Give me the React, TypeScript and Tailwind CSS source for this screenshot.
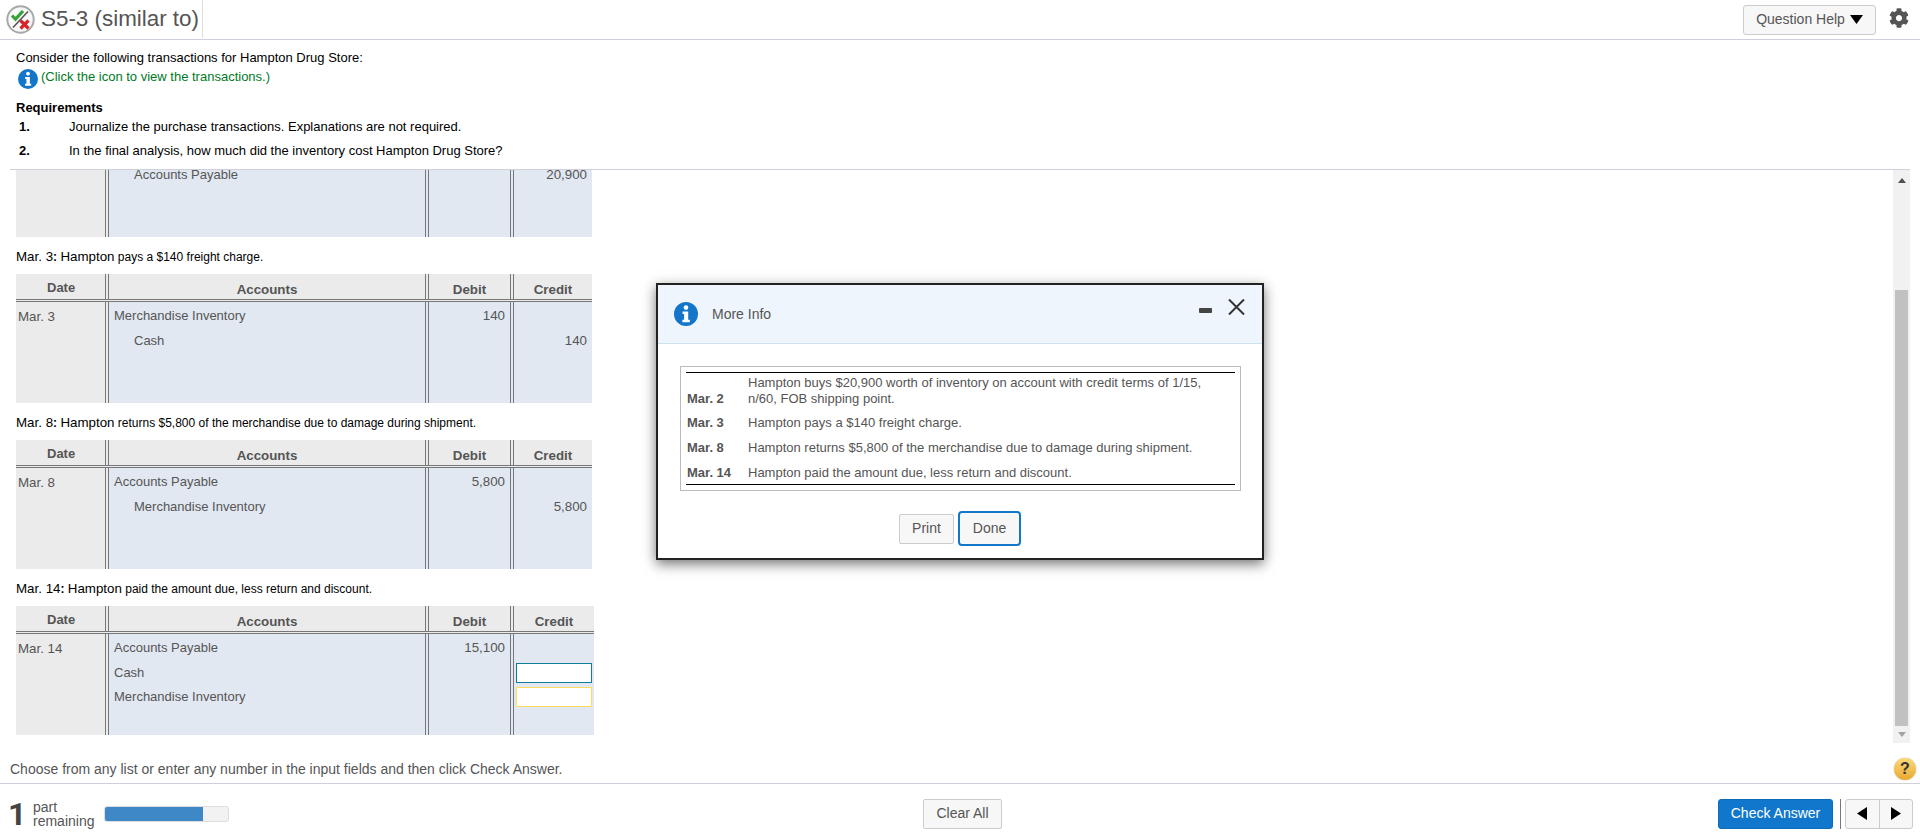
import React from "react";
import { FaCog } from "react-icons/fa";

const sans = "font-['Liberation_Sans',Arial,sans-serif]";

function InfoIcon({ size }: { size: number }) {
  return (
    <svg width={size} height={size} viewBox="0 0 24 24" className="shrink-0">
      <circle cx="12" cy="12" r="12" fill="#1476c9" />
      <circle cx="12" cy="5.6" r="2.3" fill="#fff" />
      <path d="M8.6 9.6h5.6v8.2h1.6v2.4H8.4v-2.4h1.7v-5.8H8.6z" fill="#fff" />
    </svg>
  );
}

function StatusIcon() {
  return (
    <svg width="29" height="29" viewBox="0 0 29 29" className="shrink-0">
      <circle cx="14.5" cy="14.5" r="13.2" fill="#f8f8f8" stroke="#a8a8a8" strokeWidth="2" />
      <path d="M7 22.5L22 6.5" fill="none" stroke="#555" strokeWidth="1.6" />
      <path d="M6 10.5l3.5 3.7L17 6" fill="none" stroke="#35a335" strokeWidth="3.2" />
      <path d="M14.5 15.5l8 8M22.5 15.5l-8 8" fill="none" stroke="#d8232a" strokeWidth="3.2" />
    </svg>
  );
}

type Row = { account: string; indent?: boolean; debit?: string; credit?: string; input?: string };

function Journal({ date, rows, credit = "w-[78px]" }: { date: string; rows: Row[]; credit?: string }) {
  return (
    <div className={`flex flex-col ${credit === "w-[80px]" ? "w-[578px]" : "w-[576px]"} text-[#555] text-[13.33px]`}>
      <div className="flex h-[25px] bg-[#ebebeb] border-b-[3px] border-double border-[#777] box-content font-bold">
        <div className="w-[93px] pl-[31px] pt-[4px] text-[13px] border-r-4 border-double border-[#777]">Date</div>
        <div className="w-[320px] text-center pt-[6px] border-r-4 border-double border-[#777]">Accounts</div>
        <div className="w-[85px] text-center pt-[6px] border-r-4 border-double border-[#777]">Debit</div>
        <div className={`${credit} text-center pt-[6px]`}>Credit</div>
      </div>
      <div className="flex h-[101px]">
        <div className="w-[93px] bg-[#ebebeb] pl-[2px] pt-[5px] border-r-4 border-double border-[#777]">{date}</div>
        <div className="w-[320px] bg-[#e2e8f2] pt-[4px] pl-[5px] text-[13px] border-r-4 border-double border-[#777]">
          {rows.map((r) => (
            <div key={r.account} className={`h-[24.7px] leading-[20px] ${r.indent ? "pl-[20px]" : ""}`}>{r.account}</div>
          ))}
        </div>
        <div className="w-[85px] bg-[#e2e8f2] pt-[4px] pr-[5px] text-right border-r-4 border-double border-[#777]">
          {rows.map((r) => (
            <div key={r.account} className="h-[24.7px] leading-[20px]">{r.debit ?? "\u00a0"}</div>
          ))}
        </div>
        <div className={`${credit} bg-[#e2e8f2] pt-[4px] flex flex-col items-end`}>
          {rows.map((r) => (
            <div key={r.account} className={`h-[24.7px] leading-[20px] ${r.input ? "pr-[2px]" : "pr-[5px]"}`}>
              {r.input ? (
                <div className={`w-[76px] h-[20px] bg-white border ${r.input}`} />
              ) : (
                r.credit ?? "\u00a0"
              )}
            </div>
          ))}
        </div>
      </div>
    </div>
  );
}

function Caption({ mar, text }: { mar: string; text: string }) {
  return (
    <p className="h-[37px] pt-[12px] leading-[16px] text-[12px] text-black">
      <span className="text-[13.33px]">Mar. {mar}</span><b>:</b> <span className="text-[13.33px]">Hampton</span> {text}
    </p>
  );
}

export default function App() {
  return (
    <div className={`relative flex flex-col h-[837px] w-[1920px] overflow-hidden bg-white ${sans}`}>
      <header className="flex items-center h-[40px] shrink-0 border-b border-[#cfd0dc] pr-[11px]">
        <div className="flex items-center h-[38px] mb-[1px] w-[203px] pl-[6px] gap-[6px] border-r border-[#ddd]">
          <StatusIcon />
          <span className="text-[22.4px] text-[#555] leading-none whitespace-nowrap">S5-3 (similar to)</span>
        </div>
        <button className="ml-auto flex items-center justify-center gap-[5px] w-[133px] h-[30px] rounded-[3px] border border-[#ccc] bg-[#f7f7f7] text-[14px] text-[#555]">
          Question Help
          <svg width="13" height="9" viewBox="0 0 13 9"><path d="M0 0h13L6.5 9z" fill="#000" /></svg>
        </button>
        <FaCog className="ml-[13px] mb-[3px] text-[#555]" size={20} />
      </header>

      <section className="flex flex-col h-[129px] shrink-0 pl-[16px] text-[13px] text-black">
        <p className="h-[27px] pt-[10px] leading-[16px]">Consider the following transactions for Hampton Drug Store:</p>
        <p className="flex items-center h-[21px] text-[#007a1f]">
          <span className="ml-[2px] mr-[3px] mt-[3px]"><InfoIcon size={20} /></span>
          <span className="-mt-[1px]">(Click the icon to view the transactions.)</span>
        </p>
        <p className="mt-[12px] h-[16px] leading-[16px] font-bold">Requirements</p>
        <div className="flex items-center h-[22px]"><b className="w-[53px] pl-[3px]">1.</b><span>Journalize the purchase transactions. Explanations are not required.</span></div>
        <div className="flex items-center h-[25px]"><b className="w-[53px] pl-[3px]">2.</b><span>In the final analysis, how much did the inventory cost Hampton Drug Store?</span></div>
      </section>

      <main className="flex h-[573px] shrink-0 ml-[10px] mr-[10px] border-t border-[#cfd0dc]">
        <div className="flex-1 overflow-hidden pl-[6px] text-[#555] text-[13.33px]">
          <div className="flex h-[67px] w-[576px]">
            <div className="w-[93px] bg-[#ebebeb] border-r-4 border-double border-[#777]" />
            <div className="w-[320px] bg-[#e2e8f2] pl-[25px] text-[13px] border-r-4 border-double border-[#777] leading-[16px]"><span className="block -mt-[3px]">Accounts Payable</span></div>
            <div className="w-[85px] bg-[#e2e8f2] border-r-4 border-double border-[#777]" />
            <div className="w-[78px] bg-[#e2e8f2] pr-[5px] text-right leading-[16px]"><span className="block -mt-[3px]">20,900</span></div>
          </div>
          <Caption mar="3" text="pays a $140 freight charge." />
          <Journal date="Mar. 3" rows={[{ account: "Merchandise Inventory", debit: "140" }, { account: "Cash", indent: true, credit: "140" }]} />
          <Caption mar="8" text="returns $5,800 of the merchandise due to damage during shipment." />
          <Journal date="Mar. 8" rows={[{ account: "Accounts Payable", debit: "5,800" }, { account: "Merchandise Inventory", indent: true, credit: "5,800" }]} />
          <Caption mar="14" text="paid the amount due, less return and discount." />
          <Journal date="Mar. 14" credit="w-[80px]" rows={[{ account: "Accounts Payable", debit: "15,100" }, { account: "Cash", input: "border-[#0f7c9b]" }, { account: "Merchandise Inventory", input: "border-[#ffdc5c]" }]} />
        </div>
        <div className="flex flex-col items-center w-[17px] h-[573px] bg-[#f1f1f1]">
          <svg className="mt-[8px] shrink-0" width="8" height="5" viewBox="0 0 8 5"><path d="M0 5L4 0l4 5z" fill="#505050" /></svg>
          <div className="w-[13px] h-[436px] mt-[107px] bg-[#c1c1c1]" />
          <svg className="mt-[6px] shrink-0" width="8" height="5" viewBox="0 0 8 5"><path d="M0 0h8L4 5z" fill="#a3a3a3" /></svg>
        </div>
      </main>

      <div className="flex items-center h-[41px] shrink-0 pl-[10px] pr-[4px] text-[14px] text-[#555]">
        <span className="mt-[13px]">Choose from any list or enter any number in the input fields and then click Check Answer.</span>
        <span className="ml-auto mt-[12px] flex items-center justify-center w-[22px] h-[22px] rounded-full bg-gradient-to-b from-[#fbd977] to-[#e9a92d] shadow-[0_0_1px_#8a6d20] text-[16px] font-bold text-[#333]">?</span>
      </div>

      <footer className="flex items-center h-[54px] shrink-0 border-t border-[#cfd0dc] pl-[8px] pr-[7px] pt-[6px]">
        <span className="text-[32px] font-bold leading-none text-[#444] w-[25px] font-['Roboto',sans-serif]">1</span>
        <div className="w-[71px] text-[14px] leading-[14px] text-[#555]">part<br />remaining</div>
        <div className="w-[125px] h-[16px] rounded-[3px] bg-[#f2f2f2] border border-[#ddd] overflow-hidden">
          <div className="h-full w-[80%] bg-[#3f88c8]" />
        </div>
        <button className="ml-[694px] w-[79px] h-[30px] rounded-[2px] border border-[#ccc] bg-[#f7f7f7] text-[14px] text-[#555]">Clear All</button>
        <button className="ml-auto h-[30px] w-[115px] rounded-[3px] bg-[#1177cc] border border-[#0c6cb8] text-[14px] text-white">Check Answer</button>
        <span className="w-px h-[30px] bg-[#777] ml-[7px] mr-[4px]" />
        <div className="flex w-[68px] h-[30px] rounded-[3px] border border-[#ccc] bg-[#f7f7f7]">
          <div className="flex flex-1 items-center justify-center border-r border-[#ccc]">
            <svg width="10" height="13" viewBox="0 0 10 13"><path d="M10 0v13L0 6.5z" fill="#000" /></svg>
          </div>
          <div className="flex flex-1 items-center justify-center">
            <svg width="10" height="13" viewBox="0 0 10 13"><path d="M0 0v13l10-6.5z" fill="#000" /></svg>
          </div>
        </div>
      </footer>

      <div className="absolute left-[656px] top-[283px] w-[608px] h-[277px] flex flex-col bg-white border-2 border-[#222] shadow-[0_4px_12px_rgba(0,0,0,0.55)]">
        <div className="relative flex items-center h-[59px] shrink-0 pl-[16px] bg-[#eef5fc] border-b border-[#cfe0ee] text-[#555]">
          <InfoIcon size={24} />
          <span className="ml-[14px] text-[14px]">More Info</span>
          <span className="absolute left-[541px] top-[23px] w-[13px] h-[5px] rounded-[1px] bg-[#444]" />
          <svg className="absolute left-[570px] top-[14px]" width="17" height="16" viewBox="0 0 17 16"><path d="M1 0.5L16 15.5M16 0.5L1 15.5" stroke="#333" strokeWidth="2" fill="none" /></svg>
        </div>
        <div className="mx-[22px] mt-[22px] h-[125px] w-[561px] shrink-0 border border-[#bbb] px-[5px] pt-[5px] text-[13px] text-[#555]">
          <div className="h-[113px] border-y-[1px] border-black">
            <div className="flex items-end h-[34px] leading-[16px]">
              <b className="w-[62px] pl-[1px] shrink-0">Mar. 2</b>
              <span className="w-[470px]">Hampton buys $20,900 worth of inventory on account with credit terms of 1/15, n/60, FOB shipping point.</span>
            </div>
            <div className="flex items-center h-[25px] mt-[3px]"><b className="w-[62px] pl-[1px]">Mar. 3</b><span>Hampton pays a $140 freight charge.</span></div>
            <div className="flex items-center h-[25px]"><b className="w-[62px] pl-[1px]">Mar. 8</b><span>Hampton returns $5,800 of the merchandise due to damage during shipment.</span></div>
            <div className="flex items-center h-[25px]"><b className="w-[62px] pl-[1px]">Mar. 14</b><span>Hampton paid the amount due, less return and discount.</span></div>
          </div>
        </div>
        <div className="flex justify-center items-center gap-[4px] mt-[20px] text-[14px] text-[#555]">
          <button className="w-[55px] h-[30px] rounded-[2px] border border-[#ccc] bg-[#f7f7f7]">Print</button>
          <button className="w-[63px] h-[35px] rounded-[4px] border-[2px] border-[#1476c9] bg-[#f7f7f7]">Done</button>
        </div>
      </div>
    </div>
  );
}
